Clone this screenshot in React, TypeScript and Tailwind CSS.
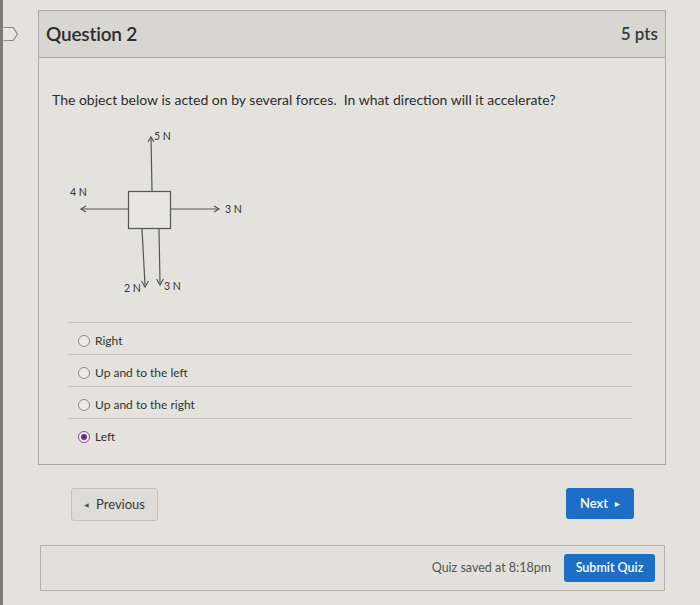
import React from 'react';

const answers = [
  { label: 'Right', checked: false },
  { label: 'Up and to the left', checked: false },
  { label: 'Up and to the right', checked: false },
  { label: 'Left', checked: true },
];

function ForceDiagram() {
  return (
    <svg width="200" height="175" viewBox="0 0 200 175" className="block">
      <g stroke="#555" strokeWidth="1.2" fill="none">
        {/* box */}
        <rect x="66.5" y="66.5" width="42" height="37" fill="#e6e5e0" />
        {/* up 5N */}
        <line x1="90" y1="66" x2="89" y2="13" />
        <polyline points="86,17 89,12 92,17" />
        {/* left 4N */}
        <line x1="66" y1="84" x2="20" y2="84" />
        <polyline points="24,81 19,84 24,87" />
        {/* right 3N */}
        <line x1="109" y1="84" x2="156" y2="84" />
        <polyline points="152,81 157,84 152,87" />
        {/* down 2N */}
        <line x1="80" y1="104" x2="83" y2="160" />
        <polyline points="79.5,156 83,162 86.5,156" />
        {/* down 3N */}
        <line x1="97" y1="104" x2="98" y2="158" />
        <polyline points="94.5,154 98,160 101.5,154" />
      </g>
      <g fill="#333" fontSize="10.5" fontFamily="Lato, 'Noto Sans', sans-serif">
        <text x="92" y="15">5 N</text>
        <text x="8" y="71">4 N</text>
        <text x="163" y="88">3 N</text>
        <text x="62" y="167">2 N</text>
        <text x="102" y="165">3 N</text>
      </g>
    </svg>
  );
}

function Radio({ checked }: { checked: boolean }) {
  if (checked) {
    return (
      <span className="flex h-[12px] w-[12px] items-center justify-center rounded-full border-[1.5px] border-[#8a4d97] bg-[#f1eef0]">
        <span className="h-[6px] w-[6px] rounded-full bg-[#6e2f7c]" />
      </span>
    );
  }
  return <span className="h-[12px] w-[12px] rounded-full border border-[#8d8c88] bg-[#ecebe7]" />;
}

export default function App() {
  return (
    <div className="relative min-h-[605px] w-[700px] overflow-hidden border-l-[3px] border-[#7d7c78] bg-[#e3e2dd] font-['Lato','Noto_Sans',sans-serif] text-[#2f2f2f]">
      {/* flag icon */}
      <svg className="absolute left-0 top-[26px]" width="16" height="16" viewBox="0 0 16 16">
        <path d="M0.5 1.5 H10 L14.5 8 L10 14.5 H0.5" fill="#e8e7e2" stroke="#8a8985" strokeWidth="1.2" />
      </svg>

      <div className="pl-[35px] pr-[34px] pt-[10px]">
        {/* Question card */}
        <div className="border border-[#aaa9a4]">
          <div className="flex h-[47px] items-center justify-between border-b border-[#aaa9a4] bg-[#d7d6d1] pl-[7px] pr-[7px]">
            <span className="text-[19px] font-semibold tracking-[-0.2px] text-[#2d2d2d]">Question 2</span>
            <span className="text-[17px] font-semibold text-[#3a3a3a]">5 pts</span>
          </div>
          <div className="pl-[13px] pr-[13px] pt-[32px]">
            <p className="text-[14px] leading-[20px] text-[#2d2d2d]">
              The object below is acted on by several forces.&nbsp; In what direction will it accelerate?
            </p>
            <div className="ml-[10px] mt-[15px]">
              <ForceDiagram />
            </div>
            <div className="ml-[16px] mr-[20px] mt-[22px] pb-[14px]">
              {answers.map((a) => (
                <div
                  key={a.label}
                  className="flex h-[32px] items-center gap-[5px] border-t border-[#c4c3be] pl-[10px] pt-[4px]"
                >
                  <Radio checked={a.checked} />
                  <span className="text-[12px] text-[#333]">{a.label}</span>
                </div>
              ))}
            </div>
          </div>
        </div>

        {/* Nav buttons */}
        <div className="mt-[23px] flex items-start justify-between pl-[33px] pr-[32px]">
          <button className="flex h-[33px] w-[87px] items-center justify-center gap-[7px] rounded-[3px] border border-[#c2c1bc] bg-[#dddcd7] text-[13px] text-[#3a3a3a]">
            <span className="text-[6px] text-[#555]">◀</span>
            Previous
          </button>
          <button className="flex h-[31px] w-[68px] items-center justify-center gap-[7px] rounded-[3px] bg-[#1d6ec6] text-[13px] font-semibold text-white">
            Next
            <span className="text-[6px]">▶</span>
          </button>
        </div>

        {/* Bottom bar */}
        <div className="ml-[2px] mr-[1px] mt-[24px] flex h-[46px] items-center justify-end gap-[13px] border border-[#b4b3ae] bg-[#e1e0db] pr-[9px]">
          <span className="text-[12.5px] text-[#555]">Quiz saved at 8:18pm</span>
          <button className="flex h-[28px] w-[91px] items-center justify-center rounded-[3px] bg-[#1d6ec6] text-[12.5px] font-semibold text-white">
            Submit Quiz
          </button>
        </div>
      </div>
    </div>
  );
}
